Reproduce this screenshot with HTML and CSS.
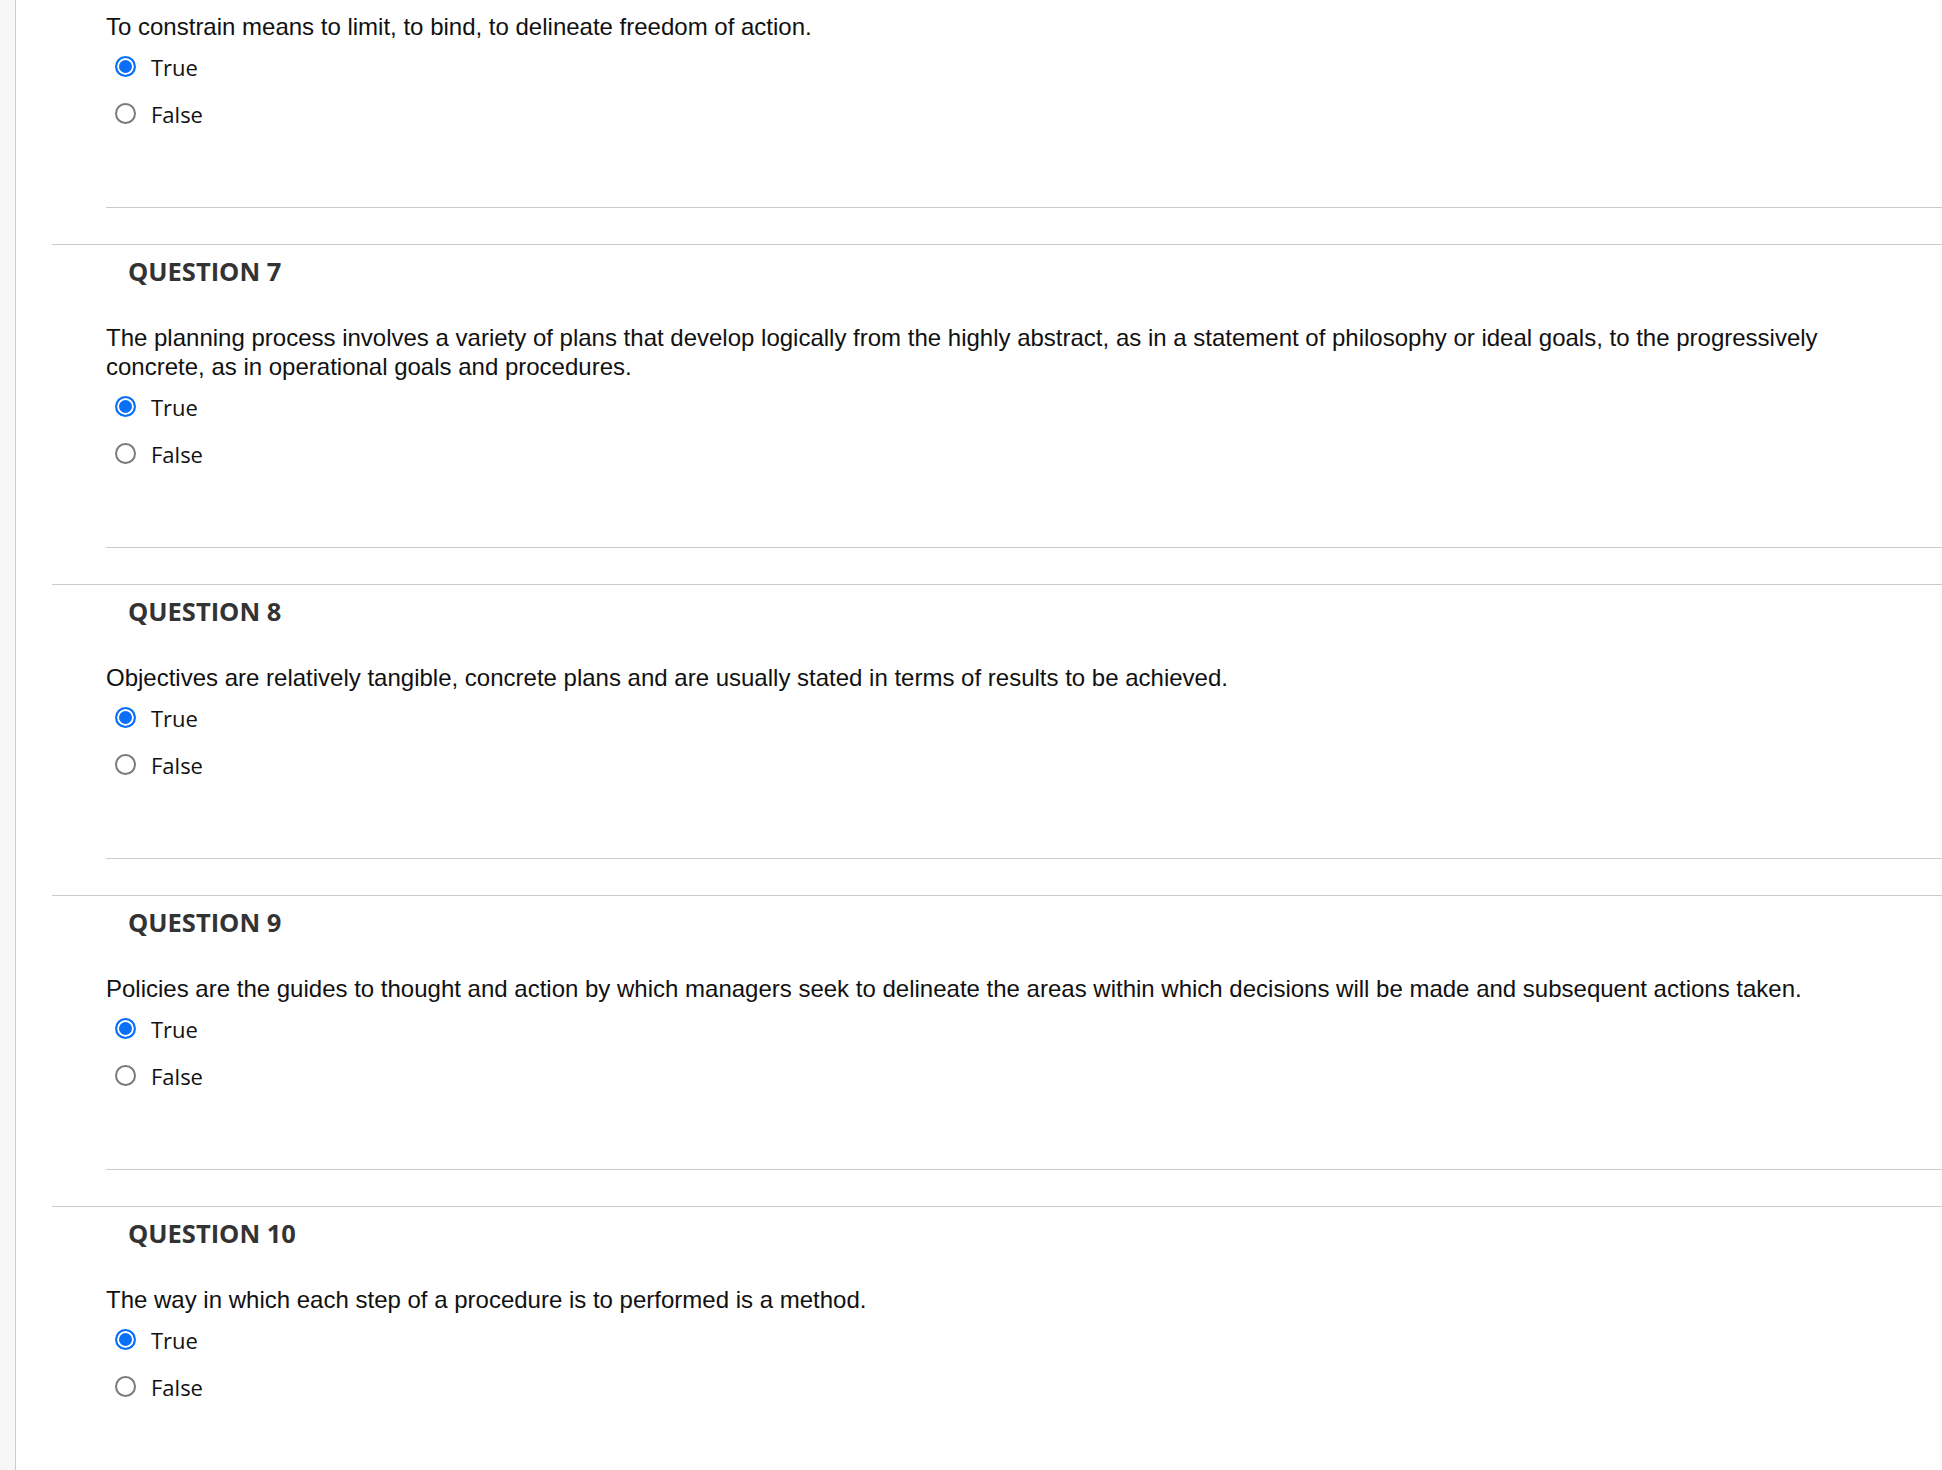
FILE: index.html
```html
<!DOCTYPE html>
<html lang="en">
<head>
<meta charset="utf-8">
<title>Test</title>
<link rel="stylesheet" href="styles.css">
</head>
<body>
<div class="page">
  <div class="rail"></div>
  <main class="content">
    <div class="question question--partial">
      <div class="q-body">
        <p class="q-text">To constrain means to limit, to bind, to delineate freedom of action.</p>
        <ul class="options">
          <li class="option"><input type="radio" name="q6" checked><span class="label">True</span></li>
          <li class="option"><input type="radio" name="q6"><span class="label">False</span></li>
        </ul>
      </div>
    </div>

    <section class="question">
      <h3 class="q-title">QUESTION 7</h3>
      <div class="q-body">
        <p class="q-text">The planning process involves a variety of plans that develop logically from the highly abstract, as in a statement of philosophy or ideal goals, to the progressively concrete, as in operational goals and procedures.</p>
        <ul class="options">
          <li class="option"><input type="radio" name="q7" checked><span class="label">True</span></li>
          <li class="option"><input type="radio" name="q7"><span class="label">False</span></li>
        </ul>
      </div>
    </section>

    <section class="question">
      <h3 class="q-title">QUESTION 8</h3>
      <div class="q-body">
        <p class="q-text">Objectives are relatively tangible, concrete plans and are usually stated in terms of results to be achieved.</p>
        <ul class="options">
          <li class="option"><input type="radio" name="q8" checked><span class="label">True</span></li>
          <li class="option"><input type="radio" name="q8"><span class="label">False</span></li>
        </ul>
      </div>
    </section>

    <section class="question">
      <h3 class="q-title">QUESTION 9</h3>
      <div class="q-body">
        <p class="q-text">Policies are the guides to thought and action by which managers seek to delineate the areas within which decisions will be made and subsequent actions taken.</p>
        <ul class="options">
          <li class="option"><input type="radio" name="q9" checked><span class="label">True</span></li>
          <li class="option"><input type="radio" name="q9"><span class="label">False</span></li>
        </ul>
      </div>
    </section>

    <section class="question">
      <h3 class="q-title">QUESTION 10</h3>
      <div class="q-body">
        <p class="q-text">The way in which each step of a procedure is to performed is a method.</p>
        <ul class="options">
          <li class="option"><input type="radio" name="q10" checked><span class="label">True</span></li>
          <li class="option"><input type="radio" name="q10"><span class="label">False</span></li>
        </ul>
      </div>
    </section>
  </main>
</div>
</body>
</html>
```

FILE: styles.css
```css
html, body {
  margin: 0;
  padding: 0;
  background: #ffffff;
}

.page {
  display: flex;
  min-height: 1470px;
}

.rail {
  flex: 0 0 15px;
  background: #f7f7f7;
  border-right: 1px solid #cccccc;
}

.content {
  flex: 1;
  min-width: 0;
}

.question {
  margin-left: 36px;
  border-top: 1px solid #cccccc;
  padding-top: 8px;
}

.question--partial {
  border-top: none;
  padding-top: 12px;
}

.q-title {
  margin: 0 0 34px 76px;
  font-family: "Open Sans", "Liberation Sans", sans-serif;
  font-weight: 700;
  font-size: 25.5px;
  line-height: 36px;
  color: #333333;
  letter-spacing: 0;
}

.q-body {
  margin: 0 0 36px 54px;
  padding-bottom: 70px;
  border-bottom: 1px solid #cccccc;
}

.q-text {
  margin: 0 76px 2px 0;
  font-family: "Liberation Sans", Arial, sans-serif;
  font-size: 24px;
  line-height: 29px;
  color: #111111;
}

.options {
  list-style: none;
  margin: 0;
  padding: 0 0 0 9px;
}

.option {
  display: flex;
  align-items: center;
  height: 47px;
}

.option input {
  appearance: none;
  -webkit-appearance: none;
  box-sizing: border-box;
  width: 21px;
  height: 21px;
  margin: 0 15px 0 0;
  border: 2px solid #7a7a7a;
  border-radius: 50%;
  background: #ffffff;
}

.option input:checked {
  border-color: #0a6ff7;
  background: #0a6ff7;
  box-shadow: inset 0 0 0 2px #ffffff;
}

.label {
  font-family: "Open Sans", "Liberation Sans", sans-serif;
  font-size: 22px;
  line-height: 30px;
  color: #111111;
}
```
